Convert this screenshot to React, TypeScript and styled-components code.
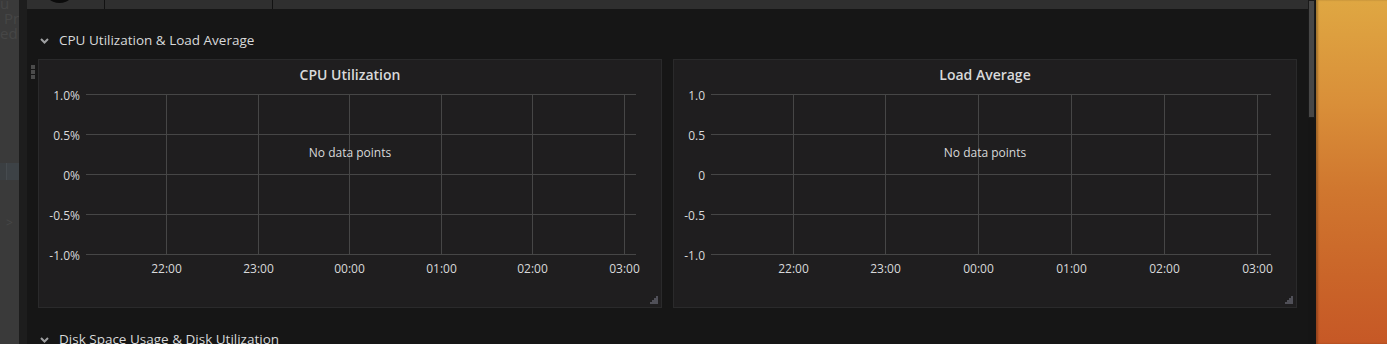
import React from "react";
import styled, { createGlobalStyle } from "styled-components";

const GlobalStyle = createGlobalStyle`
  html, body { margin: 0; padding: 0; background: #141414; }
  body { font-family: "Open Sans", "Liberation Sans", sans-serif; overflow: hidden; }
  * { box-sizing: border-box; }
`;

const Screen = styled.div`
  display: flex;
  width: 1387px;
  height: 344px;
  overflow: hidden;
`;

const BackPage = styled.div`
  width: 19px;
  flex: none;
  background: #3a3a3a;
  overflow: hidden;
  display: flex;
  flex-direction: column;
`;

const BackText = styled.div`
  flex: none;
  font-size: 15px;
  line-height: 15px;
  height: 45px;
  margin-top: -4px;
  color: #464646;
  white-space: pre;
`;

const BackBand = styled.div`
  flex: none;
  margin-top: 122px;
  height: 17px;
  background: #3d4246;
  border-left: 6px solid #3b3f42;
  box-shadow: inset 1px 0 0 #464b4f;
`;

const BackArrow = styled.div`
  flex: none;
  margin-top: 37px;
  padding-left: 6px;
  font-size: 12px;
  line-height: 12px;
  color: #474747;
`;

const Shade = styled.div`
  width: 8px;
  flex: none;
  background: #1d1d1d;
`;

const Main = styled.div`
  width: 1281px;
  flex: none;
  background: #161616;
  display: flex;
  flex-direction: column;
  overflow: hidden;
  & > * { flex: none; }
`;

const TopBar = styled.div`
  height: 9px;
  background: #2f2f2f;
  display: flex;
`;

const TopSeg = styled.div<{ $w?: number }>`
  position: relative;
  overflow: hidden;
  ${(p) => (p.$w ? `width: ${p.$w}px; flex: none;` : "flex: 1;")}
  & + & { border-left: 1px solid #121212; }
`;

const Avatar = styled.div`
  position: absolute;
  left: 16px;
  top: -30px;
  width: 33px;
  height: 33px;
  border-radius: 50%;
  background: #0b0b0b;
`;

const RowHeader = styled.div<{ $mt: number; $mb: number }>`
  display: flex;
  align-items: center;
  height: 20px;
  margin-top: ${(p) => p.$mt}px;
  margin-bottom: ${(p) => p.$mb}px;
  padding-left: 13px;
  gap: 10px;
  color: #d8d9da;
  font-size: 13.5px;
  white-space: nowrap;
`;

const Chevron = styled.svg`
  width: 9px;
  height: 6px;
  flex: none;
  margin-top: 2px;
`;

const PanelRow = styled.div`
  display: flex;
  padding-left: 4px;
  padding-right: 11px;
`;

const DragHandle = styled.div`
  display: flex;
  flex-direction: column;
  gap: 1px;
  width: 4px;
  margin: 6px 3px 0 0;
  & > span { width: 4px; height: 4px; background: #4b4b4b; }
`;

const Panels = styled.div`
  display: flex;
  gap: 11px;
`;

const Panel = styled.div`
  position: relative;
  width: 624px;
  height: 249px;
  background: #1f1e1f;
  border: 1px solid #2a2a2b;
  display: flex;
  flex-direction: column;
  & > * { flex: none; }
`;

const PanelTitle = styled.div`
  height: 23px;
  padding-top: 7px;
  line-height: 16px;
  text-align: center;
  font-size: 14px;
  font-weight: 600;
  color: #d8d9da;
`;

const ResizeHandle = styled.svg`
  position: absolute;
  right: 3px;
  bottom: 3px;
  width: 8px;
  height: 8px;
`;

const ScrollTrack = styled.div`
  width: 8px;
  flex: none;
  background: #151515;
`;

const ScrollThumb = styled.div`
  width: 7px;
  height: 118px;
  background: #474747;
  border: 1px solid #1a1a1a;
`;

const Desktop = styled.div`
  flex: 1;
  background: linear-gradient(180deg, #dfa742 0%, #d98f39 30%, #d0772f 55%, #ca6529 80%, #c65826 100%);
  box-shadow: inset 2px 0 2px rgba(0, 0, 0, 0.25);
`;

type ChartProps = { plotLeft: number; yLabels: string[]; ticks: number[] };

const TIMES = ["22:00", "23:00", "00:00", "01:00", "02:00", "03:00"];

const Chart: React.FC<ChartProps> = ({ plotLeft, yLabels, ticks }) => {
  const right = 597;
  const top = 11;
  const step = 40;
  const txt = { fontFamily: '"Open Sans", "Liberation Sans", sans-serif', fontSize: 12, fill: "#d8d9da" } as const;
  return (
    <svg width={622} height={224} style={{ display: "block" }}>
      <g stroke="#464646" strokeWidth={1} shapeRendering="crispEdges">
        {yLabels.map((_, i) => (
          <line key={"h" + i} x1={plotLeft} x2={right} y1={top + i * step + 0.5} y2={top + i * step + 0.5} />
        ))}
        {ticks.map((x, i) => (
          <line key={"v" + i} x1={x + 0.5} x2={x + 0.5} y1={top} y2={top + 4 * step + 1} />
        ))}
      </g>
      {yLabels.map((l, i) => (
        <text key={"yl" + i} x={plotLeft - 6} y={top + i * step + 1} textAnchor="end" dominantBaseline="central" {...txt}>
          {l}
        </text>
      ))}
      {ticks.map((x, i) => (
        <text key={"xl" + i} x={x + 0.5} y={185} textAnchor="middle" dominantBaseline="central" {...txt}>
          {TIMES[i]}
        </text>
      ))}
      <text x={311} y={69} textAnchor="middle" dominantBaseline="central" {...txt}>
        No data points
      </text>
    </svg>
  );
};

const Resize = () => (
  <ResizeHandle viewBox="0 0 8 8">
    <g fill="#505058">
      <rect x="6" y="0" width="2" height="2" />
      <rect x="4" y="2" width="2" height="2" />
      <rect x="6" y="2" width="2" height="2" />
      <rect x="2" y="4" width="2" height="2" />
      <rect x="4" y="4" width="2" height="2" />
      <rect x="6" y="4" width="2" height="2" />
      <rect x="0" y="6" width="2" height="2" />
      <rect x="2" y="6" width="2" height="2" />
      <rect x="4" y="6" width="2" height="2" />
      <rect x="6" y="6" width="2" height="2" />
    </g>
  </ResizeHandle>
);

const ChevronDown = () => (
  <Chevron viewBox="0 0 9 6">
    <polyline points="1,1 4.5,4.5 8,1" fill="none" stroke="#9fa0a2" strokeWidth="2" />
  </Chevron>
);

export default function App() {
  return (
    <>
      <GlobalStyle />
      <Screen>
        <BackPage>
          <BackText>{"u\n Pr\ned"}</BackText>
          <BackBand />
          <BackArrow>&gt;</BackArrow>
        </BackPage>
        <Shade />
        <Main>
          <TopBar>
            <TopSeg $w={77}>
              <Avatar />
            </TopSeg>
            <TopSeg $w={168} />
            <TopSeg />
          </TopBar>
          <RowHeader $mt={21} $mb={9}>
            <ChevronDown />
            <span>CPU Utilization &amp; Load Average</span>
          </RowHeader>
          <PanelRow>
            <DragHandle>
              <span />
              <span />
              <span />
            </DragHandle>
            <Panels>
              <Panel>
                <PanelTitle>CPU Utilization</PanelTitle>
                <Chart
                  plotLeft={47}
                  yLabels={["1.0%", "0.5%", "0%", "-0.5%", "-1.0%"]}
                  ticks={[127, 219, 310, 402, 493, 585]}
                />
                <Resize />
              </Panel>
              <Panel>
                <PanelTitle>Load Average</PanelTitle>
                <Chart
                  plotLeft={37}
                  yLabels={["1.0", "0.5", "0", "-0.5", "-1.0"]}
                  ticks={[119, 211, 304, 397, 490, 583]}
                />
                <Resize />
              </Panel>
            </Panels>
          </PanelRow>
          <RowHeader $mt={21} $mb={0}>
            <ChevronDown />
            <span>Disk Space Usage &amp; Disk Utilization</span>
          </RowHeader>
        </Main>
        <ScrollTrack>
          <ScrollThumb />
        </ScrollTrack>
        <Desktop />
      </Screen>
    </>
  );
}
